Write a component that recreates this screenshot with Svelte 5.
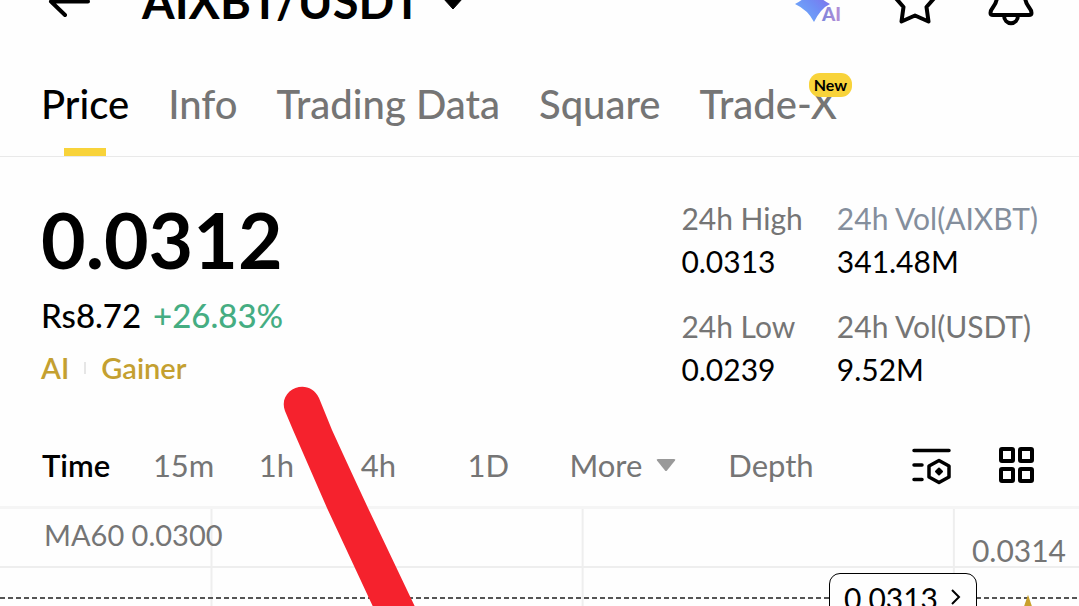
<script>
const tabs = ["Price", "Info", "Trading Data", "Square", "Trade-X"];
const intervals = ["Time", "15m", "1h", "4h", "1D"];
const stats = [
    { label: "24h High", value: "0.0313" },
    { label: "24h Vol(AIXBT)", value: "341.48M", cool: true },
    { label: "24h Low", value: "0.0239" },
    { label: "24h Vol(USDT)", value: "9.52M" },
];
let activeTab = $state("Price");
let activeInterval = $state("Time");
</script>

<main class="page">
    <header class="header">
        <button class="icon" aria-label="Back">
            <svg width="48" height="48" viewBox="0 0 48 48" fill="none" stroke="#000" stroke-width="4" stroke-linecap="round" stroke-linejoin="round">
                <path d="M42 21.5H5M19 7.500L5 21.500L19 35" />
            </svg>
        </button>
        <button class="pair">
            <span>AIXBT/USDT</span>
            <svg width="24" height="16" viewBox="0 0 24 16"><path d="M2 2h20L12 13z" fill="#000" stroke="#000" stroke-linejoin="round" /></svg>
        </button>
        <div class="actions">
            <button class="icon" aria-label="AI assistant">
                <svg width="48" height="48" viewBox="0 0 48 48">
                    <defs>
                        <linearGradient id="spark" x1="0" y1="1" x2="1" y2="0">
                            <stop offset="0" stop-color="#6fb4fb" />
                            <stop offset="0.5" stop-color="#6f8df5" />
                            <stop offset="1" stop-color="#8a62e6" />
                        </linearGradient>
                        <linearGradient id="word" x1="0" y1="0" x2="1" y2="0">
                            <stop offset="0" stop-color="#7a85dc" />
                            <stop offset="1" stop-color="#b98fd6" />
                        </linearGradient>
                    </defs>
                    <path d="M18 5Q21 17 35 24Q26 28 19 42Q13 30 0 24Q14 17 18 5z" fill="url(#spark)" />
                    <text x="27" y="41" font-family="Lato, sans-serif" font-size="19" font-weight="900" fill="url(#word)">AI</text>
                </svg>
            </button>
            <button class="icon" aria-label="Favourite">
                <svg width="48" height="48" viewBox="0 0 48 48" fill="none" stroke="#000" stroke-width="4" stroke-linejoin="round">
                    <path d="M24 -1L30.500 12L46 15L35.500 27L37.500 41.500L24 35.500L10.500 41.500L12.500 27L2 15L17.500 12z" />
                </svg>
            </button>
            <button class="icon" aria-label="Price alert">
                <svg width="48" height="48" viewBox="0 0 48 48" fill="none" stroke="#000" stroke-width="4" stroke-linejoin="round">
                    <path d="M10 16C10 8 15 2 24 2S38 8 38 16C38 27 44.500 27 44.500 33Q44.500 35 42 35H6Q3.500 35 3.500 33C3.500 27 10 27 10 16z" />
                    <path d="M17 35C17 46 31 46 31 35" />
                </svg>
            </button>
        </div>
    </header>

    <nav class="tabs">
        {#each tabs as tab}
            <button class="tab" class:active={tab === activeTab} onclick={() => (activeTab = tab)}>
                {tab}
                {#if tab === "Trade-X"}<span class="new">New</span>{/if}
            </button>
        {/each}
    </nav>

    <section class="summary">
        <div class="quote">
            <h1 class="last">0.0312</h1>
            <p class="fiat">Rs8.72 <span class="up">+26.83%</span></p>
            <div class="tags">
                <a href="#ai">AI</a>
                <span class="divider"></span>
                <a href="#gainer">Gainer</a>
            </div>
        </div>
        <dl class="stats">
            {#each stats as stat}
                <div class="stat">
                    <dt class:cool={stat.cool}>{stat.label}</dt>
                    <dd>{stat.value}</dd>
                </div>
            {/each}
        </dl>
    </section>

    <div class="intervals">
        {#each intervals as interval}
            <button class="interval" class:active={interval === activeInterval} onclick={() => (activeInterval = interval)}>{interval}</button>
        {/each}
        <button class="interval more">
            More
            <svg width="20" height="14" viewBox="0 0 20 14"><path d="M2 1h16q2 0 1 1.500L11 12.500q-1 1-2 0L1 2.500Q0 1 2 1z" fill="#999" /></svg>
        </button>
        <button class="interval">Depth</button>
        <button class="icon" aria-label="Indicators">
            <svg width="40" height="40" viewBox="0 0 40 40" fill="none" stroke="#000" stroke-width="3.500" stroke-linecap="round" stroke-linejoin="round">
                <path d="M3 5.500H38M3 20H11M3 34.500H11" />
                <path d="M28 15.500L38 21V32L28 37.500L18 32V21z" />
                <path d="M28 23.500L31 26.500L28 29.500L25 26.500z" fill="#000" stroke-width="2" />
            </svg>
        </button>
        <button class="icon" aria-label="Layout">
            <svg width="40" height="40" viewBox="0 0 40 40" fill="none" stroke="#000" stroke-width="4">
                <rect x="4" y="4" width="12" height="12" rx="1" />
                <rect x="23" y="4" width="12" height="12" rx="1" />
                <rect x="4" y="24" width="12" height="12" rx="1" />
                <rect x="23" y="24" width="12" height="12" rx="1" />
            </svg>
        </button>
    </div>

    <section class="chart">
        <svg class="grid" width="100%" height="120">
            <g stroke="#eee" stroke-width="2">
                <line x1="19.600%" x2="19.600%" y1="0" y2="120" />
                <line x1="54%" x2="54%" y1="0" y2="120" />
                <line x1="88.400%" x2="88.400%" y1="0" y2="120" />
                <line x1="0" x2="100%" y1="58" y2="58" />
            </g>
            <line x1="0" x2="100%" y1="89" y2="89" stroke="#555" stroke-width="2" stroke-dasharray="5 3" />
        </svg>
        <svg class="series" width="60" height="40" viewBox="0 0 60 40">
            <path d="M-2 44L9 12L20 44" fill="none" stroke="#c9a02c" stroke-width="4" />
        </svg>
        <span class="average">MA60 0.0300</span>
        <span class="axis">0.0314</span>
        <button class="marker">
            0.0313
            <svg width="12" height="18" viewBox="0 0 12 18" fill="none" stroke="#000" stroke-width="2"><path d="M2 1L9 8L2 15" /></svg>
        </button>
    </section>

    <svg class="pen" width="160" height="230" viewBox="0 0 160 230">
        <path d="M4 27C-4 5 28 -8 38 14L51 46Q66 79 87 124L136 227H94L46 124L12 46z" fill="#f5222d" />
    </svg>
</main>

<style>
:global(body) {
  margin: 0;
  background: #fefefe;
}

.page {
  position: relative;
  display: flex;
  flex-direction: column;
  height: 100vh;
  overflow: hidden;
  color: #000;
  font-family: Lato, "Open Sans", sans-serif;
}

button {
  padding: 0;
  border: 0;
  background: none;
  color: inherit;
  font: inherit;
  white-space: nowrap;
  cursor: pointer;
}

svg {
  display: block;
  flex: none;
}

.header {
  display: flex;
  flex: none;
  align-items: center;
  height: 96px;
  margin-top: -44px;
  padding: 0 44px 0 46px;
}

.pair {
  display: flex;
  align-items: center;
  gap: 20px;
  margin-left: 48px;
  font-size: 47px;
  font-weight: 700;
  line-height: 48px;
}

.pair span {
  padding-bottom: 6px;
}

.actions {
  display: flex;
  gap: 48px;
  margin-left: auto;
}

.tabs {
  display: flex;
  flex: none;
  gap: 39px;
  height: 104px;
  padding: 0 41px;
  border-bottom: 1px solid #e9e9e9;
}

.tab {
  position: relative;
  color: #757575;
  font-size: 40px;
  font-weight: 500;
}

.tab.active {
  color: #000;
}

.tab.active::after {
  content: "";
  position: absolute;
  bottom: 0;
  left: 50%;
  width: 42px;
  height: 8px;
  transform: translateX(-50%);
  background: #f8d33a;
}

.new {
  position: absolute;
  top: 21px;
  right: -15px;
  padding: 0 5px;
  border-radius: 11px;
  background: #f8d33a;
  color: #000;
  font-size: 16px;
  font-weight: 700;
  line-height: 24px;
}

.summary {
  display: flex;
  justify-content: space-between;
  padding: 40px 41px 0;
}

.last {
  margin: 0;
  font-size: 77px;
  font-weight: 700;
  line-height: 84px;
}

.fiat {
  display: flex;
  gap: 12px;
  margin: 14px 0 0;
  font-size: 33px;
  font-weight: 500;
  line-height: 40px;
}

.up {
  color: #45ad82;
}

.tags {
  display: flex;
  align-items: center;
  gap: 15px;
  margin-top: 15px;
  font-size: 29px;
  font-weight: 600;
  line-height: 36px;
}

.tags a {
  color: #c4a030;
  text-decoration: none;
}

.divider {
  width: 2px;
  height: 12px;
  background: #e6e6e6;
}

.stats {
  display: grid;
  grid-template-columns: auto auto;
  gap: 22px 34px;
  align-content: start;
  margin: 0;
  font-size: 30px;
  line-height: 43px;
}

dt {
  color: #757575;
}

dt.cool {
  color: #848e9c;
}

dd {
  margin: 0;
}

.intervals {
  display: grid;
  flex: none;
  grid-template-columns: 111fr 106fr 102fr 107fr 102fr 159fr 183fr 86fr 40px;
  align-items: center;
  height: 82px;
  margin-top: auto;
  padding: 0 42px;
  border-bottom: 3px solid #f5f5f5;
}

.interval {
  color: #757575;
  font-size: 31px;
  text-align: left;
}

.interval.active {
  color: #000;
  font-weight: 600;
}

.more {
  display: flex;
  align-items: center;
  gap: 14px;
}

.chart {
  position: relative;
  flex: none;
  height: 97px;
  overflow: hidden;
  color: #757575;
  font-size: 30px;
  line-height: 36px;
}

.grid {
  position: absolute;
  inset: 0;
}

.series {
  position: absolute;
  top: 80px;
  right: 0;
}

.average {
  position: absolute;
  top: 8px;
  left: 44px;
  font-size: 29px;
}

.axis {
  position: absolute;
  top: 23px;
  right: 13px;
}

.marker {
  position: absolute;
  top: 64px;
  right: 102px;
  display: flex;
  align-items: center;
  gap: 12px;
  height: 50px;
  padding: 0 14px;
  border: 1px solid #000;
  border-radius: 11px;
  background: #fefefe;
  color: #000;
}

.pen {
  position: absolute;
  top: 384px;
  left: 281px;
  pointer-events: none;
}
</style>
